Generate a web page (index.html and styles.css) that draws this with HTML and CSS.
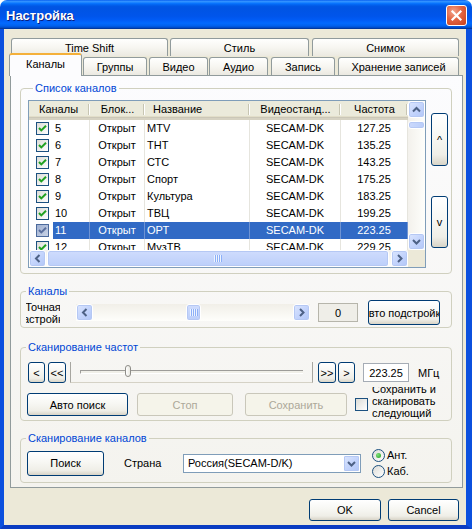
FILE: index.html
```html
<!DOCTYPE html>
<html lang="ru">
<head>
<meta charset="utf-8">
<title>Настройка</title>
<link rel="stylesheet" href="styles.css">
</head>
<body>
<div class="window">
  <div class="titlebar">
    <span class="title">Настройка</span>
    <span class="close"><svg width="13" height="13" viewBox="0 0 13 13"><path d="M2.5 2.5 L10.5 10.5 M10.5 2.5 L2.5 10.5" stroke="#fff" stroke-width="2.2" stroke-linecap="square"/></svg></span>
  </div>
  <div class="client">
    <div class="tabrow row1">
      <div class="tab t-ts">Time Shift</div>
      <div class="tab t-style">Стиль</div>
      <div class="tab t-snap">Снимок</div>
    </div>
    <div class="tabrow row2">
      <div class="tab active t-ch">Каналы</div>
      <div class="tab t-gr">Группы</div>
      <div class="tab t-vid">Видео</div>
      <div class="tab t-aud">Аудио</div>
      <div class="tab t-rec">Запись</div>
      <div class="tab t-store">Хранение записей</div>
    </div>
    <div class="panel">
      <fieldset class="group g-list">
        <legend>Список каналов</legend>
        <div class="g-list-body">
          <div class="listview">
            <div class="lv-main">
              <div class="lv-cols">
                <div class="lv-header">
                  <div class="h c1">Каналы</div>
                  <div class="h c2 center">Блок...</div>
                  <div class="h c3">Название</div>
                  <div class="h c4 center">Видеостанд...</div>
                  <div class="h c5 center">Частота</div>
                </div>
                <div class="lv-rows">
                  <div class="lv-row"><div class="c c1"><span class="cb"><svg width="11" height="11" viewBox="0 0 11 11"><path d="M2 5 L4.3 7.4 L9 2.7" stroke="#21a121" stroke-width="2" fill="none"/></svg></span><span class="lbl">5</span></div><div class="c c2">Открыт</div><div class="c c3">MTV</div><div class="c c4">SECAM-DK</div><div class="c c5">127.25</div></div>
                  <div class="lv-row"><div class="c c1"><span class="cb"><svg width="11" height="11" viewBox="0 0 11 11"><path d="M2 5 L4.3 7.4 L9 2.7" stroke="#21a121" stroke-width="2" fill="none"/></svg></span><span class="lbl">6</span></div><div class="c c2">Открыт</div><div class="c c3">ТНТ</div><div class="c c4">SECAM-DK</div><div class="c c5">135.25</div></div>
                  <div class="lv-row"><div class="c c1"><span class="cb"><svg width="11" height="11" viewBox="0 0 11 11"><path d="M2 5 L4.3 7.4 L9 2.7" stroke="#21a121" stroke-width="2" fill="none"/></svg></span><span class="lbl">7</span></div><div class="c c2">Открыт</div><div class="c c3">СТС</div><div class="c c4">SECAM-DK</div><div class="c c5">143.25</div></div>
                  <div class="lv-row"><div class="c c1"><span class="cb"><svg width="11" height="11" viewBox="0 0 11 11"><path d="M2 5 L4.3 7.4 L9 2.7" stroke="#21a121" stroke-width="2" fill="none"/></svg></span><span class="lbl">8</span></div><div class="c c2">Открыт</div><div class="c c3">Спорт</div><div class="c c4">SECAM-DK</div><div class="c c5">175.25</div></div>
                  <div class="lv-row"><div class="c c1"><span class="cb"><svg width="11" height="11" viewBox="0 0 11 11"><path d="M2 5 L4.3 7.4 L9 2.7" stroke="#21a121" stroke-width="2" fill="none"/></svg></span><span class="lbl">9</span></div><div class="c c2">Открыт</div><div class="c c3">Культура</div><div class="c c4">SECAM-DK</div><div class="c c5">183.25</div></div>
                  <div class="lv-row"><div class="c c1"><span class="cb"><svg width="11" height="11" viewBox="0 0 11 11"><path d="M2 5 L4.3 7.4 L9 2.7" stroke="#21a121" stroke-width="2" fill="none"/></svg></span><span class="lbl">10</span></div><div class="c c2">Открыт</div><div class="c c3">ТВЦ</div><div class="c c4">SECAM-DK</div><div class="c c5">199.25</div></div>
                  <div class="lv-row sel"><div class="c c1"><span class="cb"><svg width="11" height="11" viewBox="0 0 11 11"><path d="M2 5 L4.3 7.4 L9 2.7" stroke="#5a6f9e" stroke-width="2" fill="none"/></svg></span><span class="lbl">11</span></div><div class="c c2">Открыт</div><div class="c c3">ОРТ</div><div class="c c4">SECAM-DK</div><div class="c c5">223.25</div></div>
                  <div class="lv-row"><div class="c c1"><span class="cb"><svg width="11" height="11" viewBox="0 0 11 11"><path d="M2 5 L4.3 7.4 L9 2.7" stroke="#21a121" stroke-width="2" fill="none"/></svg></span><span class="lbl">12</span></div><div class="c c2">Открыт</div><div class="c c3">МузТВ</div><div class="c c4">SECAM-DK</div><div class="c c5">229.25</div></div>
                </div>
              </div>
              <div class="vscroll">
                <span class="sb-btn v"><svg width="15" height="15" viewBox="0 0 15 15"><path d="M4 9.5 L7.5 6 L11 9.5" stroke="#4d6185" stroke-width="2" fill="none"/></svg></span>
                <span class="sb-thumb vthumb"></span>
                <span class="sb-fill"></span>
                <span class="sb-btn v"><svg width="15" height="15" viewBox="0 0 15 15"><path d="M4 6 L7.5 9.5 L11 6" stroke="#4d6185" stroke-width="2" fill="none"/></svg></span>
              </div>
            </div>
            <div class="lv-bottom">
              <div class="hscroll">
                <span class="sb-btn h"><svg width="15" height="15" viewBox="0 0 15 15"><path d="M9.5 4 L6 7.5 L9.5 11" stroke="#4d6185" stroke-width="2" fill="none"/></svg></span>
                <span class="sb-thumb hthumb"><span class="grip"></span></span>
                <span class="sb-fill"></span>
                <span class="sb-btn h"><svg width="15" height="15" viewBox="0 0 15 15"><path d="M6 4 L9.5 7.5 L6 11" stroke="#4d6185" stroke-width="2" fill="none"/></svg></span>
              </div>
              <div class="corner"></div>
            </div>
          </div>
          <div class="updown">
            <div class="btn btn-up">^</div>
            <div class="btn btn-down">v</div>
          </div>
        </div>
      </fieldset>

      <fieldset class="group g-fine">
        <legend>Каналы</legend>
        <div class="row fine-row">
          <div class="fine-label"><span>Точная</span><span>настройка</span></div>
          <div class="hbar">
            <span class="sb-btn h"><svg width="15" height="15" viewBox="0 0 15 15"><path d="M9.5 4 L6 7.5 L9.5 11" stroke="#4d6185" stroke-width="2" fill="none"/></svg></span>
            <span class="sb-thumb fthumb"><span class="grip"></span></span>
            <span class="sb-fill"></span>
            <span class="sb-btn h"><svg width="15" height="15" viewBox="0 0 15 15"><path d="M6 4 L9.5 7.5 L6 11" stroke="#4d6185" stroke-width="2" fill="none"/></svg></span>
          </div>
          <div class="field ro fine-val">0</div>
          <div class="btn btn-auto"><span>Авто подстройка</span></div>
        </div>
      </fieldset>

      <fieldset class="group g-scan">
        <legend>Сканирование частот</legend>
        <div class="row scan-row1">
          <div class="btn nav n1">&lt;</div>
          <div class="btn nav n2">&lt;&lt;</div>
          <div class="trackbar"><div class="track"><span class="tthumb"></span></div></div>
          <div class="btn nav n3">&gt;&gt;</div>
          <div class="btn nav n4">&gt;</div>
          <div class="field freq">223.25</div>
          <span class="unit">МГц</span>
        </div>
        <div class="row scan-row2">
          <div class="btn b-auto">Авто поиск</div>
          <div class="btn dis b-stop">Стоп</div>
          <div class="btn dis b-save">Сохранить</div>
          <span class="box chk"></span>
          <div class="chk-label"><span>Сохранить и</span><span>сканировать</span><span>следующий</span></div>
        </div>
      </fieldset>

      <fieldset class="group g-chan">
        <legend>Сканирование каналов</legend>
        <div class="row chan-row">
          <div class="btn b-search">Поиск</div>
          <span class="country">Страна</span>
          <div class="combo"><span class="combo-text">Россия(SECAM-D/K)</span><span class="combo-btn"><svg width="15" height="15" viewBox="0 0 15 15"><path d="M4 6 L7.5 9.5 L11 6" stroke="#4d6185" stroke-width="2" fill="none"/></svg></span></div>
          <div class="radios">
            <div class="radio-row"><span class="radio on"><span class="dot"></span></span><span>Ант.</span></div>
            <div class="radio-row"><span class="radio"></span><span>Каб.</span></div>
          </div>
        </div>
      </fieldset>
    </div>
    <div class="footer">
      <div class="btn b-ok">OK</div>
      <div class="btn b-cancel">Cancel</div>
    </div>
  </div>
</div>
</body>
</html>
```

FILE: styles.css
```css
* { box-sizing: border-box; }
html, body { margin: 0; padding: 0; }
body {
  width: 472px;
  height: 529px;
  overflow: hidden;
  font-family: "Liberation Sans", Arial, sans-serif;
  font-size: 11px;
  color: #000;
  background: #fff;
}
.window {
  width: 472px;
  height: 529px;
  display: flex;
  flex-direction: column;
}
.titlebar {
  flex: none;
  height: 29px;
  display: flex;
  align-items: center;
  justify-content: space-between;
  padding: 1px 5px 0 6px;
  border-radius: 7px 7px 0 0;
  background: linear-gradient(to bottom, #0058ee 0%, #3593ff 4%, #288eff 7%, #127dff 10%, #036ffc 13%, #0262ee 17%, #0057e5 22%, #0054e3 28%, #0055eb 56%, #005bf5 68%, #026afe 80%, #0062ef 88%, #0052d6 94%, #0040ab 97%, #003092 100%);
}
.title {
  color: #fff;
  font-weight: bold;
  font-size: 13px;
  text-shadow: 1px 1px 0 #0a1e7e;
}
.close {
  width: 21px;
  height: 21px;
  border: 1px solid #fff;
  border-radius: 3px;
  display: flex;
  align-items: center;
  justify-content: center;
  background: radial-gradient(circle at 35% 30%, #f3a58e 0%, #e26442 45%, #c8401a 100%);
}
.client {
  flex: 1;
  background: #ece9d8;
  border-left: 4px solid #0b50de;
  border-right: 6px solid #0b50de;
  border-bottom: 4px solid #0a3cc2;
  display: flex;
  flex-direction: column;
}

/* tabs */
.tabrow { display: flex; flex: none; }
.row1 { margin-top: 9px; height: 18px; }
.row2 { height: 19px; align-items: flex-end; }
.tab {
  flex: none;
  height: 18px;
  border: 1px solid #919b9c;
  border-bottom: none;
  border-radius: 3px 3px 0 0;
  background: linear-gradient(to bottom, #fffffe, #f7f6f1 50%, #ebe9e1);
  display: flex;
  align-items: center;
  justify-content: center;
  white-space: nowrap;
}
.tab.active {
  align-self: flex-start;
  margin-top: -3px;
  height: 23px;
  background: #fcfcfe;
  border-top: 2px solid #f4b03a;
  position: relative;
  z-index: 2;
  padding-bottom: 3px;
}
.t-ts { margin-left: 7px; width: 157px; }
.t-style { margin-left: 2px; width: 139px; }
.t-snap { margin-left: 3px; width: 147px; }
.t-ch { margin-left: 5px; width: 73px; }
.t-gr { margin-left: 1px; width: 64px; }
.t-vid { margin-left: 2px; width: 59px; }
.t-aud { margin-left: 1px; width: 59px; }
.t-rec { margin-left: 3px; width: 64px; }
.t-store { margin-left: 3px; width: 121px; }

/* panel */
.panel {
  flex: none;
  margin-left: 6px;
  width: 453px;
  height: 413px;
  border: 1px solid #919b9c;
  background: linear-gradient(to bottom, #fcfcfe, #f4f3ee);
  padding: 5px 0 0 9px;
}
.group {
  margin: 0;
  width: 432px;
  min-width: 0;
  border: 1px solid #d0d0bf;
  border-radius: 4px;
  padding: 0;
}
.group legend {
  margin-left: 5px;
  padding: 0 2px;
  line-height: 14px;
  color: #0046d5;
}
.row { display: flex; align-items: center; }

/* group 1: list */
.g-list { padding: 5px 0 5px 7px; }
.g-list-body { display: flex; }
.listview {
  width: 398px;
  height: 168px;
  border: 1px solid #7f9db9;
  background: #fff;
  display: flex;
  flex-direction: column;
}
.lv-main { display: flex; height: 149px; }
.lv-cols { width: 379px; display: flex; flex-direction: column; }
.lv-header {
  display: flex;
  height: 19px;
  background: linear-gradient(to bottom, #ebeadb 0, #ebeadb 15px, #e2dec9 15px, #e2dec9 16px, #cbc7b8 16px, #cbc7b8 17px, #d6d2c2 17px);
}
.h {
  height: 16px;
  display: flex;
  align-items: center;
  white-space: nowrap;
  overflow: hidden;
  background: linear-gradient(#c7c5b2, #c7c5b2) no-repeat right 1px top 3px / 1px 11px,
              linear-gradient(#fff, #fff) no-repeat right 0 top 3px / 1px 11px;
}
.h.c1 { padding-left: 10px; }
.h.c3 { padding-left: 8px; }
.h.center { justify-content: center; }
.c1 { width: 61px; }
.c2 { width: 55px; }
.c3 { width: 105px; }
.c4 { width: 91px; }
.c5 { width: 67px; }
.lv-rows { height: 130px; overflow: hidden; }
.lv-row { display: flex; height: 17px; }
.c {
  height: 17px;
  line-height: 17px;
  white-space: nowrap;
  border-right: 1px solid #e6e5de;
}
.c.c1 { display: flex; align-items: center; padding-left: 7px; }
.c.c2, .c.c4, .c.c5 { text-align: center; }
.c.c3 { padding-left: 2px; }
.lbl { flex: 1; height: 17px; margin-left: 4px; padding-left: 2px; }
.cb {
  width: 13px;
  height: 13px;
  flex: none;
  border: 1px solid #1c5180;
  background: linear-gradient(135deg, #dcdcd7, #fff);
  display: flex;
  align-items: center;
  justify-content: center;
}
.sel .lbl, .sel .c2, .sel .c3, .sel .c4, .sel .c5 { background: #316ac5; color: #fff; }
.sel .c { border-right-color: #6e93d3; }
.sel .cb { background: linear-gradient(135deg, #9fb0d1, #c9d3e6); border-color: #4c6a9c; }

/* scrollbars */
.vscroll {
  width: 17px;
  display: flex;
  flex-direction: column;
  background: linear-gradient(to right, #f3f1ec, #fefefb);
}
.sb-btn {
  flex: none;
  width: 17px;
  height: 17px;
  border: 1px solid #fff;
  border-radius: 3px;
  background: linear-gradient(135deg, #dce6fe, #c2d3fc 55%, #b1c6f7);
  box-shadow: inset 0 0 0 1px #b5c8f4;
  display: flex;
  align-items: center;
  justify-content: center;
}
.sb-thumb {
  flex: none;
  border: 1px solid #fff;
  border-radius: 3px;
  box-shadow: inset 0 0 0 1px #b5c8f4;
  display: flex;
  align-items: center;
  justify-content: center;
}
.vthumb {
  height: 8px;
  margin-top: 3px;
  background: linear-gradient(to right, #cbd9fc, #b9cdfa);
}
.sb-fill { flex: 1; }
.lv-bottom { display: flex; height: 17px; }
.hscroll {
  width: 379px;
  display: flex;
  background: linear-gradient(to bottom, #f3f1ec, #fefefb);
}
.hthumb {
  width: 342px;
  margin-left: 1px;
  background: linear-gradient(to bottom, #cfdcfd, #bccffa);
}
.grip {
  width: 8px;
  height: 7px;
  background: repeating-linear-gradient(to right, #eef4fe 0 1px, #8cb0f8 1px 2px);
}
.corner { flex: 1; background: #ece9d8; }
.updown {
  margin-left: 5px;
  width: 17px;
  display: flex;
  flex-direction: column;
}

/* buttons */
.btn {
  flex: none;
  border: 1px solid #003c74;
  border-radius: 3px;
  background: linear-gradient(to bottom, #ffffff 0%, #f7f7f3 45%, #efeee7 80%, #d8d4c7 100%);
  display: flex;
  align-items: center;
  justify-content: center;
  white-space: nowrap;
  overflow: hidden;
}
.btn.dis {
  border-color: #c9c7ba;
  background: #f5f4ea;
  color: #aca899;
}
.btn-up { margin-top: 13px; height: 53px; }
.btn-down { margin-top: 30px; height: 52px; }

/* group 2 */
.g-fine { margin-top: 10px; padding: 2px 0 2px 0; }
.fine-row { height: 25px; }
.fine-label {
  margin-left: 5px;
  width: 34px;
  height: 24px;
  overflow: hidden;
  display: flex;
  flex-direction: column;
  align-items: center;
  line-height: 12px;
  white-space: nowrap;
}
.hbar {
  margin-left: 16px;
  width: 234px;
  height: 17px;
  display: flex;
  background: linear-gradient(to bottom, #f1efe8, #fefefb);
}
.fthumb {
  width: 15px;
  margin-left: 93px;
  background: linear-gradient(to bottom, #cfdcfd, #bccffa);
}
.field {
  flex: none;
  height: 19px;
  display: flex;
  align-items: center;
  justify-content: center;
  background: #fff;
  border: 1px solid #a5acb5;
}
.field.ro { background: #efeee8; border-color: #b6b5ab; }
.fine-val { margin-left: 8px; width: 40px; }
.btn-auto { margin-left: 10px; width: 72px; height: 25px; }

/* group 3 */
.g-scan { margin-top: 12px; padding: 8px 0 4px 0; }
.scan-row1 { height: 21px; }
.scan-row2 { height: 23px; margin-top: 10px; }
.nav { height: 21px; }
.n1 { margin-left: 7px; width: 17px; }
.n2 { margin-left: 3px; width: 18px; }
.n3 { margin-left: 5px; width: 18px; }
.n4 { margin-left: 2px; width: 17px; }
.trackbar {
  margin-left: 4px;
  width: 243px;
  height: 21px;
  border-left: 1px solid #a7a6a0;
  border-right: 1px solid #a7a6a0;
  border-bottom: 1px solid #d5d2c6;
  padding: 0 9px;
  display: flex;
  align-items: center;
}
.track {
  flex: 1;
  height: 4px;
  border-top: 1px solid #9d9c99;
  border-left: 1px solid #9d9c99;
  border-bottom: 1px solid #fff;
  background: #f0efe8;
  position: relative;
}
.tthumb {
  position: absolute;
  left: 44px;
  top: -6px;
  width: 6px;
  height: 12px;
  border: 1px solid #8e8d88;
  border-radius: 3px;
  background: linear-gradient(to right, #fff, #e9e8e0);
}
.freq { margin-left: 8px; width: 46px; }
.unit { margin-left: 9px; }
.b-auto { margin-left: 6px; width: 101px; height: 23px; }
.b-stop { margin-left: 9px; width: 96px; height: 23px; }
.b-save { margin-left: 12px; width: 102px; height: 23px; }
.box {
  flex: none;
  width: 13px;
  height: 13px;
  border: 1px solid #1c5180;
  background: linear-gradient(135deg, #dcdcd7, #fff);
}
.chk { margin-left: 8px; }
.chk-label {
  margin-left: 4px;
  width: 70px;
  height: 32px;
  align-self: flex-start;
  margin-top: -6px;
  overflow: hidden;
  display: flex;
  flex-direction: column;
  justify-content: flex-end;
  line-height: 12px;
  white-space: nowrap;
}

/* group 4 */
.g-chan { margin-top: 10px; padding: 2px 0 3px 0; }
.chan-row { height: 32px; }
.b-search { margin-left: 6px; width: 77px; height: 25px; }
.country { margin-left: 20px; width: 39px; }
.combo {
  margin-left: 20px;
  width: 178px;
  height: 19px;
  border: 1px solid #7f9db9;
  background: #fff;
  display: flex;
  align-items: center;
}
.combo-text { flex: 1; padding-left: 4px; white-space: nowrap; overflow: hidden; }
.combo-btn {
  width: 17px;
  height: 17px;
  border: 1px solid #fff;
  border-radius: 2px;
  background: linear-gradient(135deg, #dce6fe, #c2d3fc 55%, #b1c6f7);
  box-shadow: inset 0 0 0 1px #b5c8f4;
  display: flex;
  align-items: center;
  justify-content: center;
}
.radios { margin-left: 11px; display: flex; flex-direction: column; }
.radio-row { height: 16px; display: flex; align-items: center; gap: 2px; }
.radio {
  width: 13px;
  height: 13px;
  border: 1px solid #1c5180;
  border-radius: 50%;
  background: linear-gradient(135deg, #dcdcd7, #fff);
  display: flex;
  align-items: center;
  justify-content: center;
}
.dot {
  width: 5px;
  height: 5px;
  border-radius: 50%;
  background: radial-gradient(circle at 35% 35%, #7fe07a, #21a121);
}

/* footer */
.footer {
  margin-top: 11px;
  display: flex;
  justify-content: flex-end;
  gap: 7px;
  padding-right: 7px;
}
.b-ok { width: 72px; height: 22px; }
.b-cancel { width: 71px; height: 22px; }
```
